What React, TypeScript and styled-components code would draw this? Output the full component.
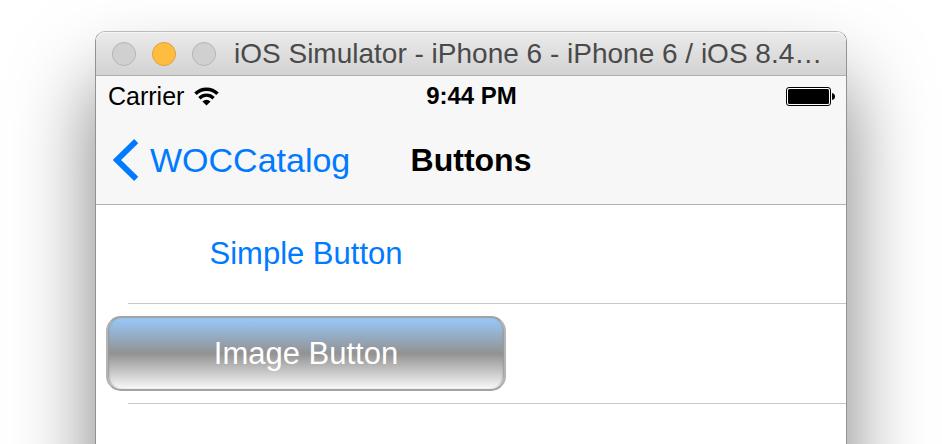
import React from "react";
import styled, { createGlobalStyle, css } from "styled-components";

const GlobalStyle = createGlobalStyle`
  *, *::before, *::after { box-sizing: border-box; }
  body {
    margin: 0;
    background: #fff;
    font-family: "Liberation Sans", Arial, Helvetica, sans-serif;
  }
`;

const Desktop = styled.main`
  height: 100vh;
  overflow: hidden;
  padding: 31px 95px 0;
`;

const Window = styled.section`
  min-height: 150vh;
  border: 1px solid #929292;
  border-top-color: #bbb;
  border-radius: 10px 10px 0 0;
  background: #fff;
  box-shadow: 0 50px 80px rgba(0, 0, 0, 0.5);
`;

const TitleBar = styled.header`
  display: flex;
  align-items: center;
  height: 44px;
  padding: 0 20px 0 16px;
  border-bottom: 1px solid #b0b0b0;
  border-radius: 9px 9px 0 0;
  background: linear-gradient(#ebebeb, #d2d2d2);
  box-shadow: inset 0 1px 0 #f5f5f5;
`;

const Lights = styled.div`
  display: flex;
  gap: 16px;
  margin-right: 18px;
`;

const Light = styled.button<{ $active?: boolean }>`
  width: 24px;
  height: 24px;
  padding: 0;
  border: 1px solid ${(p) => (p.$active ? "#dfa03a" : "#b4b4b4")};
  border-radius: 50%;
  background: ${(p) => (p.$active ? "#ffbd40" : "#d0d0d0")};
`;

const WindowTitle = styled.h1`
  flex: 1;
  margin: 0;
  color: #4a4a4a;
  font-size: 28px;
  font-weight: 400;
  line-height: 32px;
  white-space: nowrap;
`;

const Chrome = styled.div`
  position: relative;
  background: #f7f7f7;
  box-shadow: 0 1px 0 #b2b2b2;
`;

const StatusBar = styled.div`
  display: grid;
  grid-template-columns: 1fr auto 1fr;
  align-items: center;
  height: 40px;
  padding: 0 11px 0 12px;
  color: #000;
  font-size: 25px;
  line-height: 28px;
`;

const Carrier = styled.div`
  display: flex;
  align-items: center;
  gap: 10px;
`;

const Clock = styled.time`
  font-weight: 700;
  font-size: 24px;
  line-height: 30px;
`;

const BatteryIcon = styled.svg`
  justify-self: end;
`;

const NavBar = styled.nav`
  display: grid;
  grid-template-columns: 1fr auto 1fr;
  align-items: center;
  height: 88px;
  padding: 0 17px;
`;

const BackLink = styled.a`
  display: flex;
  align-items: center;
  gap: 11px;
  color: #007aff;
  font-size: 34px;
  line-height: 40px;
  text-decoration: none;
`;

const NavTitle = styled.h2`
  margin: 0;
  color: #000;
  font-size: 32px;
  font-weight: 700;
  line-height: 40px;
`;

const Rows = styled.ul`
  margin: 0;
  padding: 0;
  list-style: none;
`;

const Row = styled.li`
  &::after {
    content: "";
    display: block;
    height: 1px;
    margin-left: 32px;
    background: #c8c7cc;
  }
`;

const RowContent = styled.div`
  display: flex;
  align-items: center;
  height: 99px;
  padding: 0 10px;
`;

const CatalogButton = styled.button<{ $image?: boolean }>`
  width: 400px;
  max-width: 100%;
  height: 75px;
  padding: 0;
  border: 0;
  background: none;
  color: #007aff;
  font-family: inherit;
  font-size: 31px;
  line-height: 36px;
  ${(p) =>
    p.$image &&
    css`
      border: 2px solid #a3a3a3;
      border-color: #a3a3a3 #b4b4b4;
      border-radius: 15px;
      background: linear-gradient(#98cbff, #929292 50%, #fff) border-box;
      box-shadow: inset 2px 0 2px -1px #999, inset -2px 0 2px -1px #999;
      color: #fff;
    `}
`;

export default function App() {
  return (
    <>
      <GlobalStyle />
      <Desktop>
        <Window>
          <TitleBar>
            <Lights>
              <Light type="button" aria-label="Close" />
              <Light type="button" aria-label="Minimize" $active />
              <Light type="button" aria-label="Zoom" />
            </Lights>
            <WindowTitle>iOS Simulator - iPhone 6 - iPhone 6 / iOS 8.4…</WindowTitle>
          </TitleBar>
          <Chrome>
            <StatusBar>
              <Carrier>
                Carrier
                <svg width="25" height="19" viewBox="0 0 25 19" aria-hidden="true">
                  <path d="M1.5 6.8C7.5.6 17.5.6 23.5 6.8" fill="none" stroke="#000" strokeWidth="3.5" />
                  <path d="M5.4 11.2C9.5 7.2 15.5 7.2 19.6 11.2" fill="none" stroke="#000" strokeWidth="3.3" />
                  <path d="M12.5 18.5L8.4 14.4Q12.5 11.2 16.6 14.4Z" fill="#000" />
                </svg>
              </Carrier>
              <Clock>9:44 PM</Clock>
              <BatteryIcon width="49" height="19" viewBox="0 0 49 19" aria-hidden="true">
                <rect x="0.5" y="0.5" width="44" height="18" rx="2.5" fill="#fff" stroke="#000" />
                <rect x="2" y="2" width="41" height="15" rx="1.5" fill="#000" />
                <path d="M46 6Q49 6.5 49 9.5T46 13Z" fill="#000" />
              </BatteryIcon>
            </StatusBar>
            <NavBar>
              <BackLink href="#catalog">
                <svg width="26" height="42" viewBox="0 0 26 42" aria-hidden="true">
                  <path d="M23.2 2.1L4 21L23.2 39.9" fill="none" stroke="#007aff" strokeWidth="5.8" />
                </svg>
                WOCCatalog
              </BackLink>
              <NavTitle>Buttons</NavTitle>
            </NavBar>
          </Chrome>
          <Rows>
            <Row>
              <RowContent>
                <CatalogButton type="button">Simple Button</CatalogButton>
              </RowContent>
            </Row>
            <Row>
              <RowContent>
                <CatalogButton type="button" $image>
                  Image Button
                </CatalogButton>
              </RowContent>
            </Row>
          </Rows>
        </Window>
      </Desktop>
    </>
  );
}
